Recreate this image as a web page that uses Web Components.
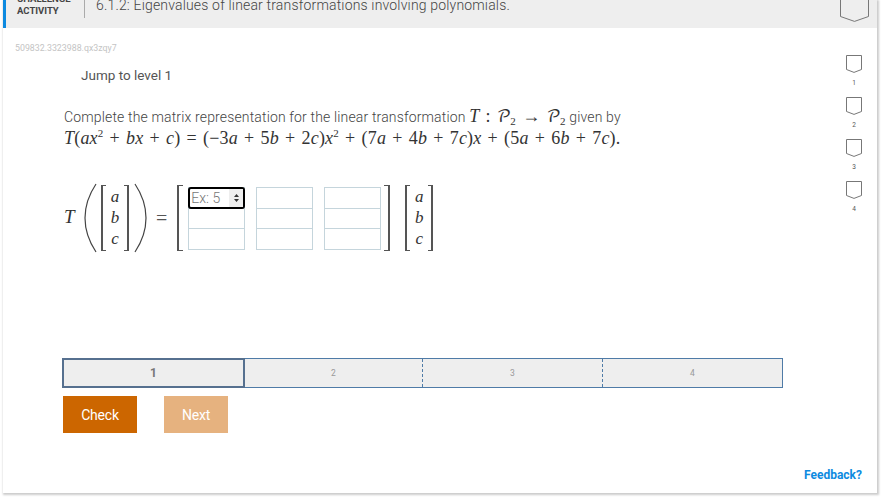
<!DOCTYPE html>
<html>
<head>
<meta charset="utf-8">
<title>Challenge activity</title>
<style>
  html, body { margin: 0; height: 497px; overflow: hidden; background: #fff; }
  body { font-family: Roboto, "Liberation Sans", sans-serif; color: #555; }
</style>
</head>
<body>
<challenge-card>
  <activity-header slot="header" title-text="6.1.2: Eigenvalues of linear transformations involving polynomials."></activity-header>
  <level-rail slot="rail" count="4"></level-rail>
  <div class="id" slot="id">509832.3323988.qx3zqy7</div>
  <jump-text slot="body"></jump-text>
  <matrix-question slot="body"></matrix-question>
  <level-bar slot="body"></level-bar>
  <action-buttons slot="body"></action-buttons>
</challenge-card>

<script>
const CHEVRON = (w, h, d) => `<svg width="${w}" height="${h}" viewBox="0 0 ${w} ${h}" fill="none" stroke="#777" stroke-width="1"><path d="M.5 .5H${w - .5}V${h - d - .5}L${w / 2} ${h - .6}L.5 ${h - d - .5}Z"/></svg>`;

class ChallengeCard extends HTMLElement {
  constructor() {
    super();
    this.attachShadow({ mode: "open" });
    this.shadowRoot.innerHTML = `
      <style>
        :host { display: block; box-sizing: border-box; width: 874px; height: 493px; margin-left: 3px; background: #fff; box-shadow: 1px 1px 2px 1px #ccc; position: relative; }
        .head { height: 28px; overflow: hidden; }
        .main { display: flex; }
        .left { width: 836px; flex: none; }
        .id { font-size: 8.8px; color: #c4c4c4; margin: 15px 0 0 12px; height: 10px; line-height: 10px; }
        .body { padding-left: 60px; }
        .rail { flex: none; padding-top: 27px; }
        .feedback { position: absolute; right: 15px; bottom: 11px; font-size: 12px; font-weight: 700; color: #0d8ae0; line-height: 14px; }
      </style>
      <div class="head"><slot name="header"></slot></div>
      <div class="main">
        <div class="left">
          <div class="id"><slot name="id"></slot></div>
          <div class="body"><slot name="body"></slot></div>
        </div>
        <div class="rail"><slot name="rail"></slot></div>
      </div>
      <div class="feedback">Feedback?</div>
    `;
  }
}

class ActivityHeader extends HTMLElement {
  constructor() {
    super();
    this.attachShadow({ mode: "open" });
    const title = this.getAttribute("title-text") || "";
    this.shadowRoot.innerHTML = `
      <style>
        :host { display: flex; height: 28px; background: #eee; border-left: 3px solid #0d8ae0; box-sizing: border-box; align-items: flex-start; overflow: hidden; }
        .label { width: 67px; margin-left: 11px; margin-top: -7px; font-size: 9.5px; font-weight: 700; line-height: 12px; color: #444; flex: none; }
        .rule { width: 1px; height: 18px; background: #aaa; flex: none; }
        .title { margin-left: 11px; margin-top: -4px; font-size: 14px; line-height: 18px; font-weight: 300; color: #444; white-space: nowrap; letter-spacing: .17px; flex: 1; }
        .icon { margin: -6px 8px 0 0; line-height: 0; flex: none; }
      </style>
      <div class="label">CHALLENGE<br>ACTIVITY</div>
      <div class="rule"></div>
      <div class="title">${title}</div>
      <div class="icon">${CHEVRON(29, 28, 5)}</div>
    `;
  }
}

class LevelRail extends HTMLElement {
  constructor() {
    super();
    this.attachShadow({ mode: "open" });
    const count = Number(this.getAttribute("count")) || 0;
    let items = "";
    for (let i = 1; i <= count; i++) {
      items += `<div class="item">${CHEVRON(16, 18, 3)}<span>${i}</span></div>`;
    }
    this.shadowRoot.innerHTML = `
      <style>
        :host { display: flex; flex-direction: column; width: 16px; margin-left: 7px; gap: 12px; }
        .item { display: flex; flex-direction: column; align-items: center; height: 30px; }
        svg { display: block; flex: none; }
        span { font-size: 6.5px; line-height: 8px; margin-top: 6px; color: #555; }
      </style>
      ${items}
    `;
  }
}

class JumpText extends HTMLElement {
  constructor() {
    super();
    this.attachShadow({ mode: "open" });
    this.shadowRoot.innerHTML = `
      <style>
        :host { display: block; margin: 13px 0 0 18px; font-size: 13.5px; line-height: 18px; color: #555; font-weight: 400; }
      </style>
      Jump to level 1
    `;
  }
}

class MatrixQuestion extends HTMLElement {
  constructor() {
    super();
    this.attachShadow({ mode: "open" });
    const brackets = (side) => `<div class="br ${side}"></div>`;
    const vec = `${brackets("l")}<div class="vec"><i>a</i><i>b</i><i>c</i></div>${brackets("r")}`;
    const col = `<div class="col"><div class="cell"></div><div class="cell"></div><div class="cell"></div></div>`;
    this.shadowRoot.innerHTML = `
      <style>
        :host { display: block; color: #444; }
        .text { margin: 22px 0 0 1px; font-size: 14px; line-height: 21px; font-weight: 300; color: #444; white-space: nowrap; height: 42px; letter-spacing: .15px; }
        .m { font-family: "Liberation Serif", serif; font-size: 18px; font-weight: 400; color: #333; letter-spacing: .2px; word-spacing: 1.4px; }
        .m i { font-style: italic; }
        .p { font-family: "DejaVu Math TeX Gyre", "Noto Sans Math", "DejaVu Serif", serif; font-size: 17px; }
        .m sup, .m sub { font-size: 11px; line-height: 0; }
        .m sub { vertical-align: -3px; margin-left: -1px; }
        .row { display: flex; align-items: center; height: 70px; margin: 35px 0 0 1px; font-family: "Liberation Serif", serif; font-size: 19px; color: #333; }
        .t { width: 20px; font-style: italic; flex: none; margin-top: -2px; }
        svg { display: block; flex: none; }
        .br { width: 5px; height: 66px; border: 2px solid #555; border-width: 1.5px 0; flex: none; box-sizing: border-box; }
        .br.l { border-left-width: 2px; }
        .br.r { border-right-width: 2px; }
        .vec { display: flex; flex-direction: column; align-items: center; justify-content: space-between; width: 18px; height: 62px; flex: none; font-size: 17px; line-height: 20px; }
        .eq { font-size: 20px; margin: 0 10px 0 9px; color: #555; }
        .col { display: flex; flex-direction: column; width: 57px; flex: none; border: 1px solid #c5d5dc; box-sizing: border-box; height: 63px; position: relative; margin-top: 1px; }
        .col + .col { margin-left: 11px; }
        .cell { flex: 1; }
        .cell + .cell { border-top: 1px solid #c5d5dc; }
        .focus { position: absolute; left: -1px; top: -1px; width: 57px; height: 22px; box-sizing: border-box; border: 2px solid #000; border-radius: 3px; background: #fff; display: flex; align-items: center; font-family: Roboto, sans-serif; font-size: 14px; font-weight: 300; color: #777; padding-left: 1px; }
        .focus b { margin-left: auto; width: 14px; height: 100%; background: #eee; display: flex; align-items: center; justify-content: center; }
      </style>
      <div class="text">Complete the matrix representation for the linear transformation <span class="m"><i>T</i> : <span class="p">&#x1D4AB;</span><sub>2</sub> → <span class="p">&#x1D4AB;</span><sub>2</sub></span> given by<br><span class="m"><i>T</i>(<i>ax</i><sup>2</sup> + <i>bx</i> + <i>c</i>) = (−3<i>a</i> + 5<i>b</i> + 2<i>c</i>)<i>x</i><sup>2</sup> + (7<i>a</i> + 4<i>b</i> + 7<i>c</i>)<i>x</i> + (5<i>a</i> + 6<i>b</i> + 7<i>c</i>).</span></div>
      <div class="row">
        <div class="t">T</div>
        <svg width="13" height="70" viewBox="0 0 13 70" fill="none" stroke="#444" stroke-width="1.2"><path d="M12 1C4 13 1 24 1 35s3 22 11 34"/></svg>
        <div style="width:4px"></div>
        ${vec}
        <div style="width:5px"></div>
        <svg width="13" height="70" viewBox="0 0 13 70" fill="none" stroke="#444" stroke-width="1.2"><path d="M1 1c8 12 11 23 11 34s-3 22-11 34"/></svg>
        <div class="eq">=</div>
        <div class="br l" style="width:6px"></div>
        <div style="width:5px"></div>
        <div class="col">
          <div class="cell"></div><div class="cell"></div><div class="cell"></div>
          <div class="focus">Ex: 5<b><svg width="7" height="10" viewBox="0 0 7 10" fill="#333"><path d="M3.5 1L6 4H1zM3.5 9L1 6h5z"/></svg></b></div>
        </div>
        ${col}
        ${col}
        <div style="width:3px"></div>
        <div class="br r" style="width:6px"></div>
        <div style="width:15px"></div>
        ${vec}
      </div>
    `;
  }
}

class LevelBar extends HTMLElement {
  constructor() {
    super();
    this.attachShadow({ mode: "open" });
    this.shadowRoot.innerHTML = `
      <style>
        :host { display: grid; grid-template-columns: 182px 177px 180px 180px; width: 721px; height: 30px; margin: 105px 0 0 -1px; background: #eee; box-sizing: border-box; border: 1px solid #4f7ba7; position: relative; }
        div { display: flex; align-items: center; justify-content: center; font-size: 8.5px; color: #999; }
        div + div + div { border-left: 1px dashed #4f7ba7; }
        .on { margin: -1px 0 -1px -1px; border: 2px solid #56708f; font-size: 12px; font-weight: 700; color: #777; }
      </style>
      <div class="on">1</div><div>2</div><div>3</div><div>4</div>
    `;
  }
}

class ActionButtons extends HTMLElement {
  constructor() {
    super();
    this.attachShadow({ mode: "open" });
    this.shadowRoot.innerHTML = `
      <style>
        :host { display: flex; gap: 27px; margin-top: 8px; }
        button { height: 37px; border: 0; padding: 0; color: #fff; font: 400 14px Roboto, sans-serif; letter-spacing: -.2px; }
        .check { width: 74px; background: #cc6600; }
        .next { width: 64px; background: #e6b27f; }
      </style>
      <button class="check">Check</button>
      <button class="next">Next</button>
    `;
  }
}

customElements.define("challenge-card", ChallengeCard);
customElements.define("activity-header", ActivityHeader);
customElements.define("level-rail", LevelRail);
customElements.define("jump-text", JumpText);
customElements.define("matrix-question", MatrixQuestion);
customElements.define("level-bar", LevelBar);
customElements.define("action-buttons", ActionButtons);
</script>
</body>
</html>
